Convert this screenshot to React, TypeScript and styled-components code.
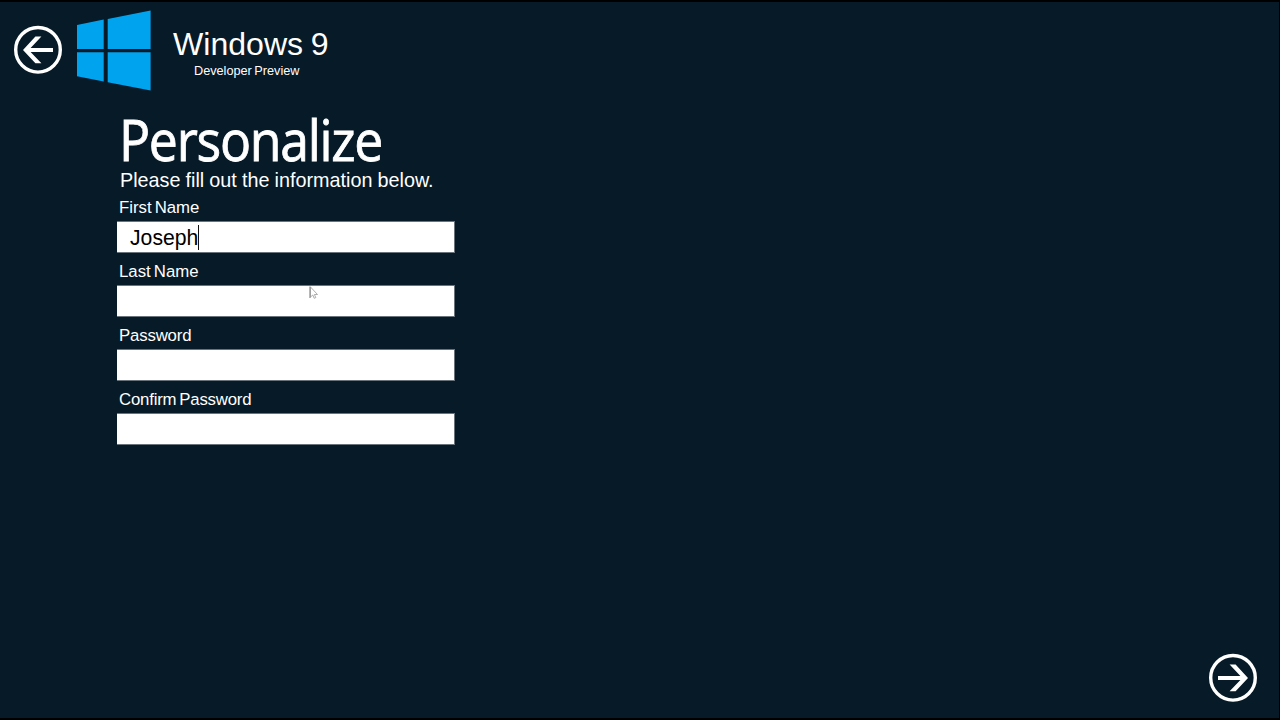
import React, { useState } from 'react'
import styled, { createGlobalStyle } from 'styled-components'

const fields = [
  { id: 'first', label: 'First Name', spacing: -0.02 },
  { id: 'last', label: 'Last Name', spacing: -0.02 },
  { id: 'password', label: 'Password', spacing: -0.17 },
  { id: 'confirm', label: 'Confirm Password', spacing: -0.2 },
]

function ArrowIcon({ flip }: { flip?: boolean }) {
  return (
    <Arrow viewBox="0 0 50 50" $flip={flip}>
      <circle cx="25" cy="24.8" r="22.3" fill="none" stroke="#fff" strokeWidth="3.4" />
      <path d="M10 24.9L22.4 11.4H28.4L17.6 23.1H40V26.9H17.6L28.4 38.2H22.4Z" fill="#fff" />
    </Arrow>
  )
}

function App() {
  const [values, setValues] = useState<Record<string, string>>({ first: 'Joseph' })

  return (
    <Screen>
      <GlobalStyle />
      <Header>
        <BackButton aria-label="Back">
          <ArrowIcon />
        </BackButton>
        <Logo viewBox="0 0 74 81">
          <path d="M0 15L26.7 9.6V39H0ZM30.7 8.9L73.6 0.5V39H30.7ZM0 42.2H26.7V71.5L0 66.3ZM30.7 42.2H73.6V80.5L30.7 72.3Z" />
        </Logo>
        <Brand>
          <BrandName>Windows 9</BrandName>
          <Edition>Developer Preview</Edition>
        </Brand>
      </Header>

      <Form>
        <Title>Personalize</Title>
        <Intro>Please fill out the information below.</Intro>
        {fields.map((field) => (
          <Field key={field.id}>
            <Label htmlFor={field.id} $spacing={field.spacing}>{field.label}</Label>
            <InputBox>
              <Input
                id={field.id}
                size={Math.max((values[field.id] || '').length, 1)}
                value={values[field.id] || ''}
                onChange={(e) => setValues({ ...values, [field.id]: e.target.value })}
              />
              {field.id === 'first' && <Caret />}
            </InputBox>
          </Field>
        ))}
      </Form>

      <Footer>
        <NextButton aria-label="Next">
          <ArrowIcon flip />
        </NextButton>
      </Footer>

      <Pointer viewBox="0 0 10 14">
        <path d="M1.5 1V11L3.8 9L5.2 12.3L6.8 11.6L5.4 8.5H8.5Z" fill="#fff" stroke="#999" strokeWidth="0.8" />
        <path d="M1 0.5V12" stroke="#999" strokeWidth="1.4" />
      </Pointer>
    </Screen>
  )
}

export default App

const GlobalStyle = createGlobalStyle`
  * { box-sizing: border-box; }
  body { margin: 0; background: #000; }
`

const Screen = styled.div`
  position: relative;
  display: flex;
  flex-direction: column;
  width: 1280px;
  height: 720px;
  overflow: hidden;
  background: #071a28;
  border: solid #000;
  border-width: 2px 1px 2px 0;
  color: #fff;
  font-family: "Liberation Sans", Arial, sans-serif;
`

const Header = styled.header`
  display: flex;
  height: 98px;
  padding: 8px 0 0 13px;
`

const RoundButton = styled.button`
  display: block;
  width: 50px;
  height: 50px;
  padding: 0;
  border: 0;
  background: none;
`

const BackButton = styled(RoundButton)`
  margin-top: 15px;
`

const NextButton = styled(RoundButton)`
  margin-right: 21px;
`

const Arrow = styled.svg<{ $flip?: boolean }>`
  display: block;
  width: 50px;
  height: 50px;
  transform: ${(p) => (p.$flip ? 'scaleX(-1)' : 'none')};
`

const Logo = styled.svg`
  width: 74px;
  height: 81px;
  margin-left: 14px;
  fill: #00a3ee;
`

const Brand = styled.div`
  width: 156px;
  margin: 16px 0 0 22px;
  white-space: nowrap;
`

const BrandName = styled.div`
  height: 37px;
  font-size: 32.1px;
  line-height: 36px;
  word-spacing: -1.2px;
`

const Edition = styled.div`
  padding-left: 21px;
  font-size: 12.7px;
  line-height: 16px;
  word-spacing: -1px;
`

const Form = styled.form`
  width: 338px;
  margin-left: 117px;
  white-space: nowrap;
`

const Title = styled.h1`
  height: 70px;
  margin: 0 0 0 2px;
  font: 400 56px/78px "Open Sans", "Noto Sans", sans-serif;
  letter-spacing: -1.4px;
  -webkit-text-stroke: 0.8px #fff;
  transform: scaleX(0.925);
  transform-origin: 0 0;
`

const Intro = styled.p`
  height: 27px;
  margin: 0 0 0 3px;
  padding-top: 0;
  font-size: 19.8px;
  line-height: 20px;
  word-spacing: -0.4px;
`

const Field = styled.div`
  height: 64px;
`

const Label = styled.label<{ $spacing: number }>`
  display: block;
  height: 24px;
  padding: 1px 0 0 2px;
  font-size: 16.8px;
  line-height: 20px;
  word-spacing: -1.5px;
  letter-spacing: ${(p) => p.$spacing}px;
`

const InputBox = styled.div`
  display: flex;
  align-items: center;
  width: 338px;
  height: 32px;
  padding-left: 13px;
  background: #fff;
  border: 1px solid #68737b;
  border-left: 0;
`

const Input = styled.input`
  field-sizing: content;
  padding: 1px 0 0;
  border: 0;
  outline: 0;
  background: none;
  color: #000;
  font: 21.2px "Liberation Sans", Arial, sans-serif;
`

const Caret = styled.span`
  width: 1px;
  height: 25px;
  background: #111;
`

const Footer = styled.footer`
  display: flex;
  justify-content: flex-end;
  margin-top: auto;
  padding-bottom: 15px;
`

// mouse cursor floating over the last name field
const Pointer = styled.svg`
  position: absolute;
  left: 309px;
  top: 284px;
  width: 10px;
  height: 14px;
`
